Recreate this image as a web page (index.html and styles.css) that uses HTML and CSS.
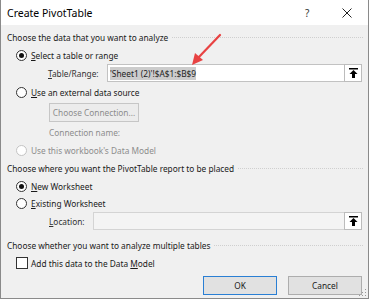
FILE: index.html
```html
<!DOCTYPE html>
<html lang="en">
<head>
    <meta charset="UTF-8">
    <meta name="viewport" content="width=device-width, initial-scale=1.0">
    <title>Create PivotTable</title>
    <link rel="stylesheet" href="styles.css">
</head>
<body>
    <div class="window">
        <div class="titlebar">
            <span class="title">Create PivotTable</span>
            <span class="help">?</span>
            <svg class="close" width="10" height="10" viewBox="0 0 10 10">
                <path d="M0.5 0.5 L9.5 9.5 M9.5 0.5 L0.5 9.5" stroke="#222" stroke-width="1" fill="none"/>
            </svg>
        </div>
        <div class="content">
            <div class="heading h1"><span>Choose the data that you want to analyze</span></div>
            <div class="row option"><span class="radio checked"></span><span><u>S</u>elect a table or range</span></div>
            <div class="row field">
                <span class="label range-label"><u>T</u>able/Range:</span>
                <div class="input">
                    <span class="selected">'Sheet1 (2)'!$A$1:$B$9</span>
                </div>
                <span class="pick"><svg width="9" height="10" viewBox="0 0 9 10"><rect x="0" y="0" width="9" height="1.5" fill="#000"/><path d="M4.5 2 L8.5 6 L6 6 L6 10 L3 10 L3 6 L0.5 6 Z" fill="#000"/></svg></span>
            </div>
            <div class="row option"><span class="radio"></span><span><u>U</u>se an external data source</span></div>
            <div class="row indent conn"><span class="btn disabled">Choose Connection...</span></div>
            <div class="row indent small"><span class="muted">Connection name:</span></div>
            <div class="row option"><span class="radio off"></span><span class="muted">Use this workbook's Data Model</span></div>
            <div class="heading h2"><span>Choose where you want the PivotTable report to be placed</span></div>
            <div class="row option"><span class="radio checked"></span><span><u>N</u>ew Worksheet</span></div>
            <div class="row option tight"><span class="radio"></span><span><u>E</u>xisting Worksheet</span></div>
            <div class="row field">
                <span class="label loc-label"><u>L</u>ocation:</span>
                <div class="input dim"></div>
                <span class="pick"><svg width="9" height="10" viewBox="0 0 9 10"><rect x="0" y="0" width="9" height="1.5" fill="#000"/><path d="M4.5 2 L8.5 6 L6 6 L6 10 L3 10 L3 6 L0.5 6 Z" fill="#000"/></svg></span>
            </div>
            <div class="heading h3"><span>Choose whether you want to analyze multiple tables</span></div>
            <div class="row option"><span class="check"></span><span>Add this data to the Data <u>M</u>odel</span></div>
            <div class="actions">
                <span class="btn default">OK</span>
                <span class="btn">Cancel</span>
            </div>
        </div>
        <svg class="arrow" width="40" height="40" viewBox="0 0 40 40">
            <line x1="33" y1="2" x2="11" y2="25" stroke="#e84242" stroke-width="2.2" stroke-linecap="round"/>
            <path d="M5 32 L8 20 L16 27 Z" fill="#e84242"/>
        </svg>
        <svg class="grip" width="8" height="8" viewBox="0 0 8 8">
            <rect x="6" y="0" width="1" height="1" fill="#999"/>
            <rect x="3" y="3" width="1" height="1" fill="#999"/>
            <rect x="6" y="3" width="1" height="1" fill="#999"/>
            <rect x="0" y="6" width="1" height="1" fill="#999"/>
            <rect x="3" y="6" width="1" height="1" fill="#999"/>
            <rect x="6" y="6" width="1" height="1" fill="#999"/>
        </svg>
    </div>
</body>
</html>
```

FILE: styles.css
```css
body {
    margin: 0;
    padding: 0;
    background-color: #fff;
    font-family: "Noto Sans", Arial, sans-serif;
    font-size: 8.3px;
    color: #1a1a1a;
}
u {
    text-decoration: underline;
    text-underline-offset: 1px;
}
.window {
    position: relative;
    width: 367px;
    height: 298px;
    border: 1px solid #8a8a8a;
    border-top: none;
    background-color: #f0f0f0;
    overflow: hidden;
}
.titlebar {
    height: 25px;
    background-color: #fff;
    display: flex;
    align-items: center;
    padding-left: 6px;
    font-size: 10.5px;
}
.titlebar .title {
    flex: 1;
    color: #000;
}
.titlebar .help {
    width: 10px;
    color: #333;
    font-size: 10px;
    margin-right: 27px;
}
.titlebar .close {
    margin-right: 16px;
}
.content {
    display: flex;
    flex-direction: column;
}
.heading {
    height: 16px;
    display: flex;
    align-items: center;
    padding-left: 6px;
    padding-right: 5px;
    white-space: nowrap;
}
.heading::after {
    content: "";
    flex: 1;
    border-top: 1px dotted #cfcfcf;
    margin-left: 4px;
}
.h1 {
    margin-top: 4px;
}
.h2 {
    margin-top: 2px;
}
.h3 {
    margin-top: 7px;
}
.row {
    height: 16px;
    display: flex;
    align-items: center;
    white-space: nowrap;
}
.option {
    margin-top: 2px;
    padding-left: 15px;
}
.option.tight {
    margin-top: 1px;
}
.radio {
    width: 9px;
    height: 9px;
    border: 1px solid #333;
    border-radius: 50%;
    background-color: #fff;
    margin-right: 4px;
    display: flex;
    align-items: center;
    justify-content: center;
}
.radio.checked::after {
    content: "";
    width: 5px;
    height: 5px;
    border-radius: 50%;
    background-color: #111;
}
.radio.off {
    border-color: #c4c4c4;
}
.check {
    width: 10px;
    height: 10px;
    border: 1px solid #333;
    background-color: #fff;
    margin-right: 3px;
}
.muted {
    color: #8d8d8d;
}
.field {
    height: 18px;
    margin-top: 1px;
    padding-right: 6px;
}
.label {
    color: #333;
}
.range-label {
    margin-left: 47px;
    width: 59px;
}
.loc-label {
    margin-left: 48px;
    width: 44px;
}
.input {
    flex: 1;
    height: 16px;
    border: 1px solid #c2c2c2;
    border-right: none;
    background-color: #fff;
    display: flex;
    align-items: center;
    padding-left: 2px;
}
.input.dim {
    background-color: #f4f4f4;
    border-color: #d4d4d4;
}
.selected {
    background-color: #cccccc;
    line-height: 13px;
    color: #222;
}
.pick {
    width: 16px;
    height: 16px;
    border: 1px solid #bcbcbc;
    background-color: #fff;
    display: flex;
    align-items: center;
    justify-content: center;
}
.indent {
    padding-left: 48px;
}
.conn {
    height: 19px;
    margin-top: 3px;
}
.small {
    margin-top: 2px;
}
.btn {
    height: 17px;
    border: 1px solid #adadad;
    background-color: #e1e1e1;
    display: flex;
    align-items: center;
    justify-content: center;
    width: 72px;
    white-space: nowrap;
}
.btn.disabled {
    width: 88px;
    border-color: #c6c6c6;
    background-color: #ececec;
    color: #8d8d8d;
}
.btn.default {
    border-color: #2a7fd4;
}
.actions {
    display: flex;
    justify-content: flex-end;
    gap: 11px;
    margin-top: 5px;
    padding-right: 6px;
}
.arrow {
    position: absolute;
    left: 186px;
    top: 33px;
}
.grip {
    position: absolute;
    right: 1px;
    bottom: 1px;
}
```
